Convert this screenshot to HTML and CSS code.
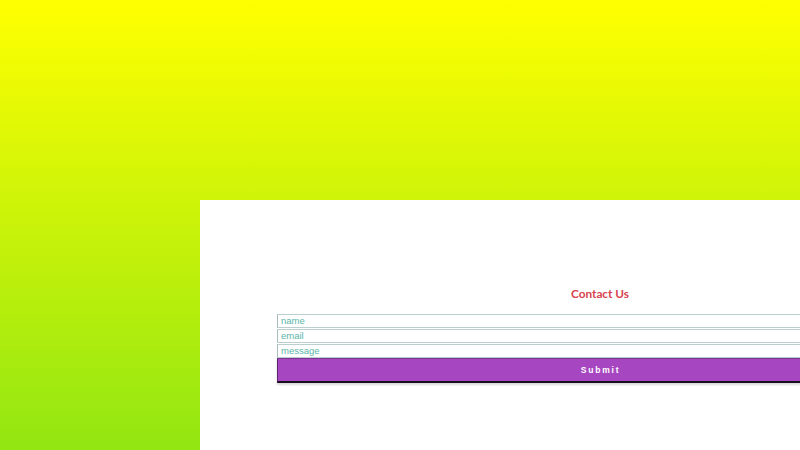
FILE: index.html
```html
<!DOCTYPE html>
<html>
<head>
<meta charset="utf-8">
<link rel="stylesheet" href="styles.css">
</head>
<body>
<div class="page">
  <section class="panel">
    <h2 class="title">Contact Us</h2>
    <form class="form">
      <input class="field" type="text" placeholder="name">
      <input class="field" type="text" placeholder="email">
      <input class="field" type="text" placeholder="message">
      <button class="submit" type="button">Submit</button>
    </form>
  </section>
</div>
</body>
</html>
```

FILE: styles.css
```css
html, body {
  margin: 0;
  padding: 0;
  width: 800px;
  height: 450px;
  overflow: hidden;
}
body {
  background: linear-gradient(to bottom, #ffff00 0%, #92e612 100%);
  font-family: "Liberation Sans", Arial, sans-serif;
}
.page {
  padding: 200px 0 0 200px;
}
.panel {
  background: #ffffff;
  width: 800px;
  height: 260px;
  padding-top: 86px;
  box-sizing: border-box;
  overflow: hidden;
}
.title {
  margin: 0 0 12px;
  text-align: center;
  font-family: Lato, "Open Sans", sans-serif;
  font-weight: bold;
  font-size: 11.8px;
  line-height: 16px;
  color: #d6434f;
}
.form {
  display: flex;
  flex-direction: column;
  gap: 1px;
  margin: 0 77px;
}
.field {
  display: block;
  height: 12px;
  line-height: 12px;
  box-sizing: content-box;
  margin: 0;
  padding: 0 3px;
  border: 1px solid #bccece;
  border-left-color: #a9bcbc;
  background: #fff;
  font-family: "Liberation Sans", Arial, sans-serif;
  font-size: 9.5px;
  color: #5bb5a8;
  outline: none;
}
.field::placeholder {
  color: #5bb5a8;
  opacity: 1;
}
.submit {
  display: block;
  margin-top: -1px;
  height: 25px;
  border: none;
  border-top: 1px solid #7a3690;
  border-bottom: 2px solid #1a0f1e;
  border-left: 1px solid #5a2468;
  background: #a646c0;
  color: #fff;
  font-family: "Liberation Sans", Arial, sans-serif;
  font-weight: bold;
  font-size: 8.5px;
  letter-spacing: 1.8px;
  box-shadow: 0 2px 2px rgba(0, 0, 0, 0.15);
}
```
